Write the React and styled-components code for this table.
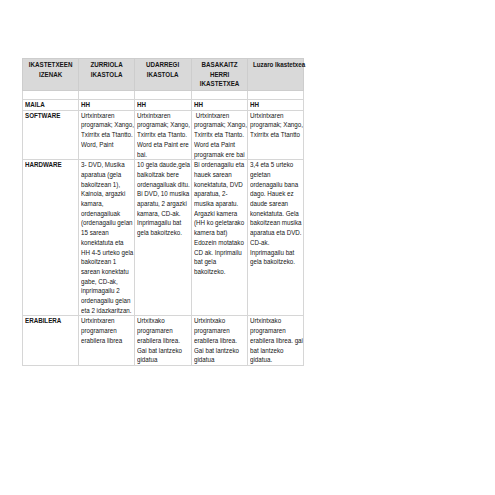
import styled, { createGlobalStyle } from "styled-components";

const GlobalStyle = createGlobalStyle`
  body {
    margin: 0;
    background: #ffffff;
  }
`;

const headers = [
  ["IKASTETXEEN", "IZENAK"],
  ["ZURRIOLA", "IKASTOLA"],
  ["UDARREGI", "IKASTOLA"],
  ["BASAKAITZ", "HERRI", "IKASTETXEA"],
  ["Luzaro Ikastetxea"],
];

const rows = [
  {
    label: "MAILA",
    bold: true,
    cells: [["HH"], ["HH"], ["HH"], ["HH"]],
  },
  {
    label: "SOFTWARE",
    cells: [
      ["Urtxintxaren", "programak; Xango,", "Txirritx eta Ttantto.", "Word, Paint"],
      ["Urtxintxaren", "programak; Xango,", "Txirritx eta Ttanto.", "Word eta Paint ere", "bai."],
      ["\u00a0Urtxintxaren", "programak; Xango,", "Txirritx eta Ttanto.", "Word eta Paint", "programak ere bai"],
      ["Urtxintxaren", "programak; Xango,", "Txirritx eta Ttantto"],
    ],
  },
  {
    label: "HARDWARE",
    cells: [
      [
        "3- DVD, Musika",
        "aparatua (gela",
        "bakoitzean 1),",
        "Kainoia, argazki",
        "kamara,",
        "ordenagailuak",
        "(ordenagailu gelan",
        "15 sarean",
        "konektatuta eta",
        "HH 4-5 urteko gela",
        "bakoitzean 1",
        "sarean konektatu",
        "gabe, CD-ak,",
        "inprimagailu 2",
        "ordenagailu gelan",
        "eta 2 idazkaritzan.",
      ],
      [
        "10 gela daude,gela",
        "baikoitzak bere",
        "ordenagailuak ditu.",
        "Bi DVD, 10 musika",
        "aparatu, 2 argazki",
        "kamara, CD-ak.",
        "Inprimagailu bat",
        "gela bakoitzeko.",
      ],
      [
        "Bi ordenagailu eta",
        "hauek sarean",
        "konektatuta, DVD",
        "aparatua, 2-",
        "musika aparatu.",
        "Argazki kamera",
        "(HH ko geletarako",
        "kamera bat)",
        "Edozein motatako",
        "CD ak. Inprimailu",
        "bat gela",
        "bakoitzeko.",
      ],
      [
        "3,4 eta 5 urteko",
        "geletan",
        "ordenagailu bana",
        "dago. Hauek ez",
        "daude sarean",
        "konektatuta. Gela",
        "bakoitzean musika",
        "aparatua eta DVD.",
        "CD-ak.",
        "Inprimagailu bat",
        "gela bakoitzeko.",
      ],
    ],
  },
  {
    label: "ERABILERA",
    cells: [
      ["Urtxintxaren", "programaren", "erabilera librea"],
      ["Urtxitxako", "programaren", "erabilera librea.", "Gai bat lantzeko", "gidatua"],
      ["Urtxintxako", "programaren", "erabilera librea.", "Gai bat lantzeko", "gidatua"],
      ["Urtxintxako", "programaren", "erabilera librea. gai", "bat lantzeko", "gidatua."],
    ],
  },
];

const Page = styled.div`
  padding: 58px 0 0 22px;
`;

const Table = styled.table`
  border-collapse: collapse;
  table-layout: fixed;
  width: 282px;
  font-family: "Liberation Sans", Arial, sans-serif;
  font-size: 7.6px;
  line-height: 9.7px;
  color: #151515;
`;

const HeadCell = styled.th`
  height: 30px;
  padding: 1px 0 0;
  background: #d9d9d9;
  border: 1px solid #cdcdcd;
  text-align: center;
  vertical-align: top;
  font-weight: 700;
  white-space: nowrap;
`;

const Cell = styled.td`
  padding: 0 2px;
  border: 1px solid #d6d6d6;
  vertical-align: top;
  text-align: left;
  white-space: nowrap;
  font-weight: ${(p) => (p.$bold ? 700 : 400)};
  height: ${(p) => (p.$spacer ? "8px" : "auto")};
`;

/* narrow the text the way Arial Narrow would */
const Narrow = styled.div`
  transform: scaleX(0.82);
  transform-origin: ${(p) => (p.$center ? "center top" : "left top")};
`;

const Lines = ({ lines, center }) => (
  <Narrow $center={center}>
    {lines.map((line, i) => (
      <span key={i}>
        {line}
        {i < lines.length - 1 && <br />}
      </span>
    ))}
  </Narrow>
);

export default function App() {
  return (
    <>
      <GlobalStyle />
      <Page>
        <Table>
          <thead>
            <tr>
              {headers.map((h, i) => (
                <HeadCell key={i}>
                  <Lines lines={h} center />
                </HeadCell>
              ))}
            </tr>
          </thead>
          <tbody>
            <tr>
              {headers.map((_, i) => (
                <Cell key={i} $spacer />
              ))}
            </tr>
            {rows.map((row) => (
              <tr key={row.label}>
                <Cell $bold>
                  <Lines lines={[row.label]} />
                </Cell>
                {row.cells.map((c, i) => (
                  <Cell key={i} $bold={row.bold}>
                    <Lines lines={c} />
                  </Cell>
                ))}
              </tr>
            ))}
          </tbody>
        </Table>
      </Page>
    </>
  );
}
